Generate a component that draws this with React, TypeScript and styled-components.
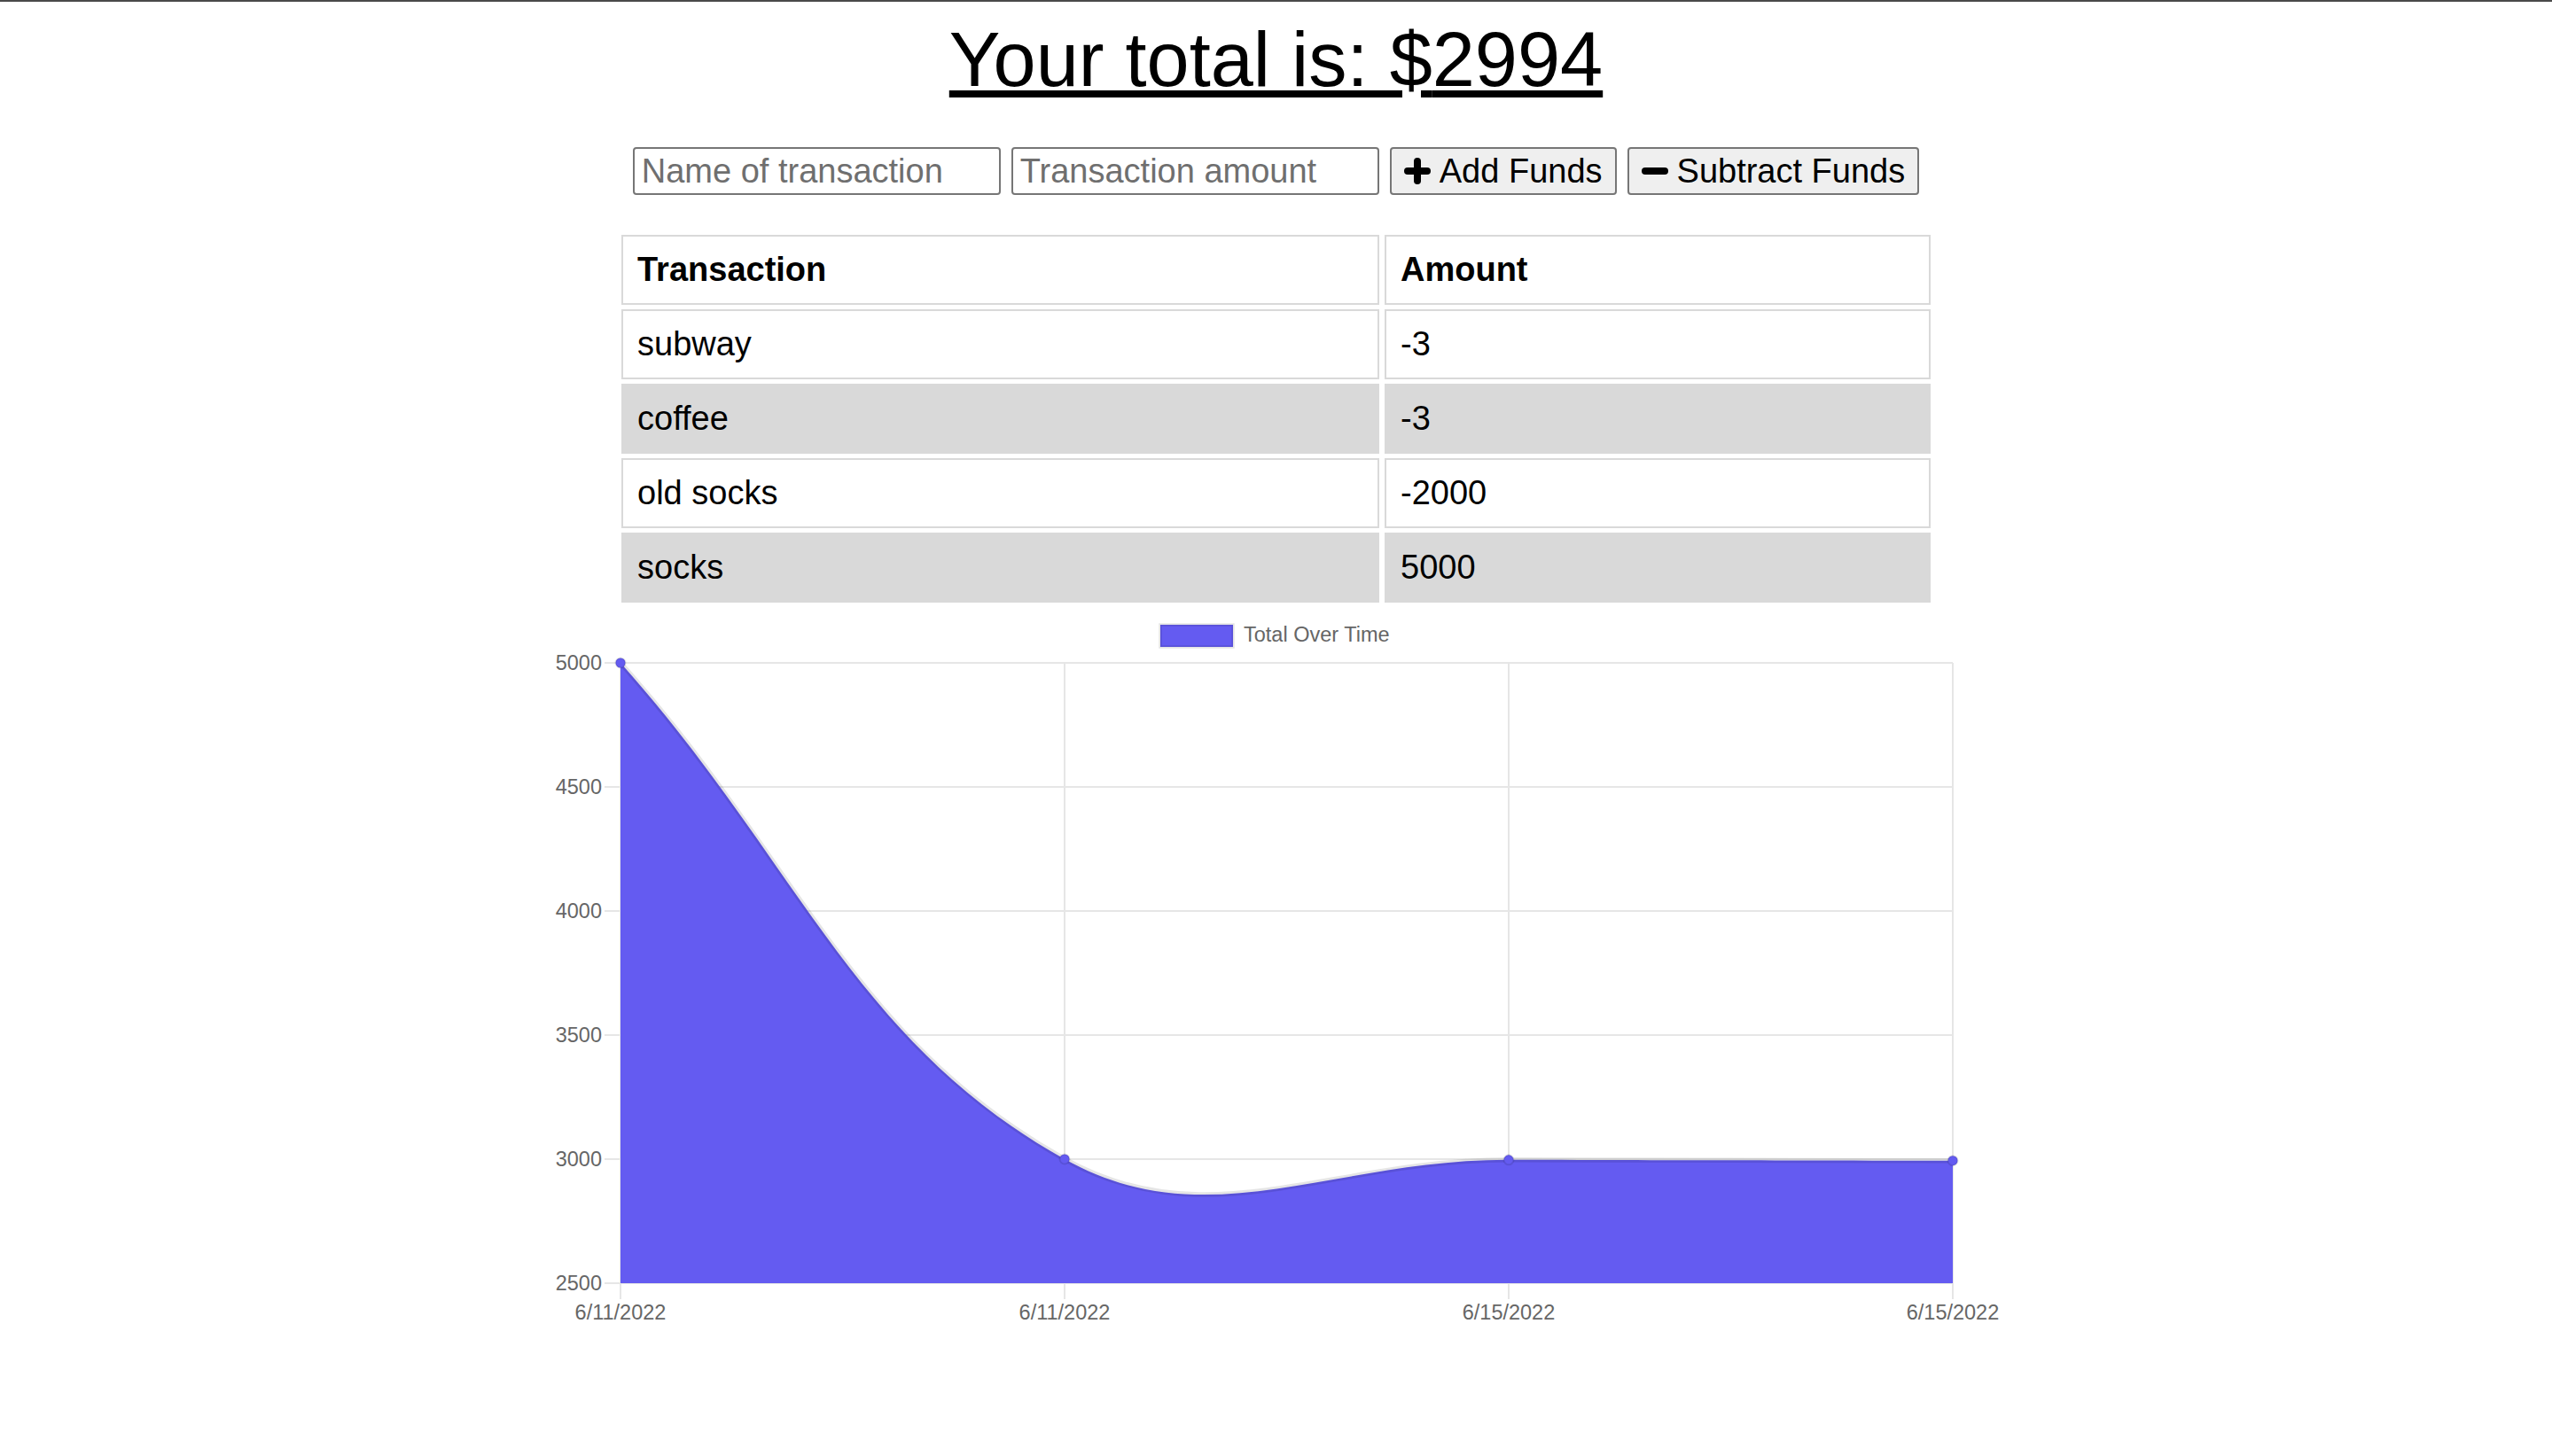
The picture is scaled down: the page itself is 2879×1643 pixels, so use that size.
import React from "react";
import styled, { createGlobalStyle } from "styled-components";

const transactions = [
  { name: "subway", value: -3, date: "6/15/2022" },
  { name: "coffee", value: -3, date: "6/15/2022" },
  { name: "old socks", value: -2000, date: "6/11/2022" },
  { name: "socks", value: 5000, date: "6/11/2022" },
];

const FILL = "#645bf1";
const GRID = "#e6e6e6";
const FONT = `"Liberation Sans", Arial, Helvetica, sans-serif`;

const GlobalStyle = createGlobalStyle`
  html, body {
    margin: 0;
    padding: 0;
    background: #fff;
    font-family: ${FONT};
  }
`;

const Page = styled.div`
  min-height: 1641px;
  border-top: 2px solid #4a4a4a;
  display: flex;
  flex-direction: column;
  align-items: center;
`;

const Total = styled.h1`
  margin: 16px 0 0;
  font-size: 86.5px;
  font-weight: 400;
  line-height: normal;
  color: #000;
  text-decoration: underline;
  text-decoration-thickness: 8px;
  text-underline-offset: 5px;
`;

const Form = styled.form`
  display: flex;
  gap: 12px;
  margin-top: 49px;
`;

const Field = styled.input`
  box-sizing: border-box;
  width: 415px;
  height: 54px;
  padding: 0 8px;
  border: 2px solid #767676;
  border-radius: 4px;
  font-family: ${FONT};
  font-size: 38px;
  color: #000;
  background: #fff;
  &::placeholder {
    color: #6f6f6f;
  }
`;

const Button = styled.button`
  box-sizing: border-box;
  height: 54px;
  display: flex;
  align-items: center;
  gap: 10px;
  padding: 0 14px;
  border: 2px solid #767676;
  border-radius: 4px;
  background: #efefef;
  font-family: ${FONT};
  font-size: 38px;
  color: #000;
  cursor: pointer;
`;

const Table = styled.table`
  margin-top: 40px;
  border-collapse: separate;
  border-spacing: 6px 5px;
  font-size: 38px;
  color: #000;
`;

const Cell = styled.td<{ $shade: boolean; $w: number }>`
  box-sizing: border-box;
  width: ${({ $w }) => $w}px;
  height: 79px;
  padding: 0 16px;
  border: 2px solid #d9d9d9;
  background: ${({ $shade }) => ($shade ? "#d9d9d9" : "#fff")};
  text-align: left;
  vertical-align: middle;
`;

const HeadCell = styled(Cell).attrs({ as: "th" })`
  font-weight: 700;
`;

const ChartWrap = styled.div`
  width: 1700px;
  height: 810px;
  margin-top: 6px;
`;

const PlusIcon = () => (
  <svg width="30" height="30" viewBox="0 0 30 30">
    <rect x="0" y="11" width="30" height="8" rx="4" fill="#000" />
    <rect x="11" y="0" width="8" height="30" rx="4" fill="#000" />
  </svg>
);

const MinusIcon = () => (
  <svg width="30" height="30" viewBox="0 0 30 30">
    <rect x="0" y="11" width="30" height="8" rx="4" fill="#000" />
  </svg>
);

// chart geometry (svg px)
const L = 110;
const R = 1613;
const T = 57;
const B = 757;
const Y_MIN = 2500;
const Y_MAX = 5000;

type Pt = { x: number; y: number };

function spline(prev: Pt, cur: Pt, next: Pt, t: number) {
  const d01 = Math.hypot(cur.x - prev.x, cur.y - prev.y);
  const d12 = Math.hypot(next.x - cur.x, next.y - cur.y);
  const sum = d01 + d12 || 1;
  const fa = (t * d01) / sum;
  const fb = (t * d12) / sum;
  return {
    prev: { x: cur.x - fa * (next.x - prev.x), y: cur.y - fa * (next.y - prev.y) },
    next: { x: cur.x + fb * (next.x - prev.x), y: cur.y + fb * (next.y - prev.y) },
  };
}

function TotalChart() {
  // oldest first, running total
  const series = [...transactions].reverse();
  let running = 0;
  const values = series.map((t) => (running += t.value));
  const step = (R - L) / (values.length - 1);
  const toY = (v: number) => T + ((Y_MAX - v) / (Y_MAX - Y_MIN)) * (B - T);
  const pts: Pt[] = values.map((v, i) => ({ x: L + i * step, y: toY(v) }));
  const ctrl = pts.map((p, i) =>
    spline(pts[Math.max(0, i - 1)], p, pts[Math.min(pts.length - 1, i + 1)], 0.4)
  );
  let line = `M ${pts[0].x} ${pts[0].y}`;
  for (let i = 1; i < pts.length; i++) {
    const a = ctrl[i - 1].next;
    const b = ctrl[i].prev;
    line += ` C ${a.x} ${a.y} ${b.x} ${b.y} ${pts[i].x} ${pts[i].y}`;
  }
  const area = `${line} L ${R} ${B} L ${L} ${B} Z`;
  const ticks = [5000, 4500, 4000, 3500, 3000, 2500];

  return (
    <svg width="1700" height="810" viewBox="0 0 1700 810" fontFamily={FONT}>
      <rect x="719" y="14" width="82" height="25" fill={FILL} stroke="rgba(0,0,0,0.1)" strokeWidth="3.5" />
      <text x="813" y="33" fontSize="23.5" fill="#666">
        Total Over Time
      </text>
      {ticks.map((v) => (
        <g key={v}>
          <line x1={92} x2={R} y1={toY(v)} y2={toY(v)} stroke={GRID} strokeWidth="2" />
          <text x={89} y={toY(v) + 8} fontSize="23.5" fill="#666" textAnchor="end">
            {v}
          </text>
        </g>
      ))}
      {pts.map((p, i) => (
        <g key={i}>
          <line x1={p.x} x2={p.x} y1={T} y2={B + 18} stroke={GRID} strokeWidth="2" />
          <text x={p.x} y={798} fontSize="23.5" fill="#666" textAnchor="middle">
            {series[i].date}
          </text>
        </g>
      ))}
      <path d={area} fill={FILL} />
      <path d={line} fill="none" stroke="rgba(0,0,0,0.1)" strokeWidth="5.5" />
      {pts.map((p, i) => (
        <circle key={i} cx={p.x} cy={p.y} r="5.5" fill={FILL} stroke="rgba(0,0,0,0.1)" strokeWidth="2" />
      ))}
    </svg>
  );
}

export default function App() {
  const total = transactions.reduce((s, t) => s + t.value, 0);
  return (
    <>
      <GlobalStyle />
      <Page>
        <Total>Your total is: ${total}</Total>
        <Form onSubmit={(e) => e.preventDefault()}>
          <Field type="text" placeholder="Name of transaction" />
          <Field type="number" placeholder="Transaction amount" />
          <Button type="button">
            <PlusIcon />
            Add Funds
          </Button>
          <Button type="button">
            <MinusIcon />
            Subtract Funds
          </Button>
        </Form>
        <Table>
          <thead>
            <tr>
              <HeadCell $shade={false} $w={855}>Transaction</HeadCell>
              <HeadCell $shade={false} $w={616}>Amount</HeadCell>
            </tr>
          </thead>
          <tbody>
            {transactions.map((t, i) => (
              <tr key={t.name}>
                <Cell $shade={i % 2 === 1} $w={855}>{t.name}</Cell>
                <Cell $shade={i % 2 === 1} $w={616}>{t.value}</Cell>
              </tr>
            ))}
          </tbody>
        </Table>
        <ChartWrap>
          <TotalChart />
        </ChartWrap>
      </Page>
    </>
  );
}
